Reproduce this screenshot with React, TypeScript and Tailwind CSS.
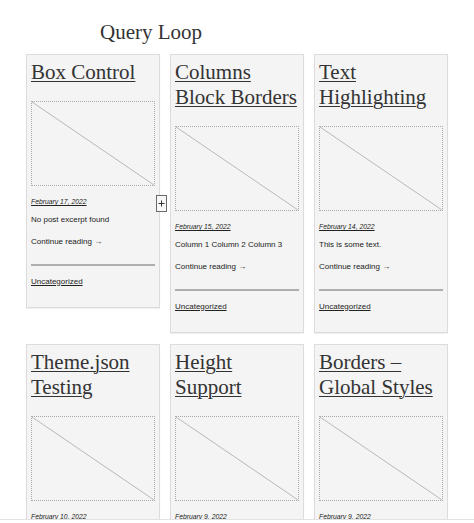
import React from "react";

type Post = {
  title: string[];
  date: string;
  excerpt?: string;
};

const posts: Post[] = [
  { title: ["Box Control"], date: "February 17, 2022", excerpt: "No post excerpt found" },
  { title: ["Columns", "Block Borders"], date: "February 15, 2022", excerpt: "Column 1 Column 2 Column 3" },
  { title: ["Text", "Highlighting"], date: "February 14, 2022", excerpt: "This is some text." },
  { title: ["Theme.json", "Testing"], date: "February 10, 2022", excerpt: "" },
  { title: ["Height", "Support"], date: "February 9, 2022", excerpt: "" },
  { title: ["Borders \u2013", "Global Styles"], date: "February 9, 2022", excerpt: "" },
];

const serif = { fontFamily: '"Liberation Serif", "DejaVu Serif", serif' };

function Placeholder() {
  return (
    <div className="relative h-[85px] w-full border border-dotted border-[#a9a9a9]">
      <svg className="absolute inset-0 h-full w-full" viewBox="0 0 100 100" preserveAspectRatio="none">
        <line x1="0" y1="0" x2="100" y2="100" stroke="#b8b8b8" strokeWidth="1" vectorEffect="non-scaling-stroke" />
      </svg>
    </div>
  );
}

function Card({ post, index }: { post: Post; index: number }) {
  return (
    <div className="relative border border-[#dcdcdc] bg-[#f4f4f4] px-[4px] pb-[19px] pl-[4px] pt-[5px] shadow-[0_1px_1px_rgba(0,0,0,0.06)]">
      <h2
        className="text-[21px] font-normal leading-[25px] text-[#333] underline decoration-1 underline-offset-[2px]"
        style={serif}
      >
        {post.title.map((l, i) => (
          <React.Fragment key={i}>
            {l}
            {i < post.title.length - 1 && <br />}
          </React.Fragment>
        ))}
      </h2>
      <div className="mt-[16px]">
        <Placeholder />
      </div>
      <div className="mt-[11px] text-[6.8px] italic leading-[10px] text-[#222] underline">{post.date}</div>
      <div className="mt-[7px] text-[8px] leading-[12px] text-[#222]">{post.excerpt}</div>
      <div className="mt-[10px] text-[8px] leading-[12px] text-[#222]">Continue reading →</div>
      <div className="mt-[15.5px] h-[2px] w-full bg-[#aeaeae]" />
      <div className="mt-[10px] text-[8px] leading-[12px] text-[#222] underline">Uncategorized</div>
      {index === 0 && (
        <div className="absolute left-[129px] top-[140px] flex h-[17px] w-[11px] items-center justify-center border border-[#6b6b6b] bg-[#f7f7f7]">
          <svg width="7" height="7" viewBox="0 0 7 7">
            <path d="M3.5 0.5V6.5M0.5 3.5H6.5" stroke="#333" strokeWidth="1" />
          </svg>
        </div>
      )}
    </div>
  );
}

export default function App() {
  return (
    <div
      className="h-[520px] w-[474px] overflow-hidden border-b border-[#e2e2e2] bg-white"
      style={{ fontFamily: '"Liberation Sans", Arial, sans-serif' }}
    >
      <h1 className="pl-[100px] pt-[20px] text-[21px] font-normal leading-[25px] text-[#333]" style={serif}>
        Query Loop
      </h1>
      <div className="grid grid-cols-[134px_134px_134px] items-start gap-x-[10px] gap-y-[11px] pl-[26px] pt-[9px]">
        {posts.map((p, i) => (
          <Card key={i} post={p} index={i} />
        ))}
      </div>
    </div>
  );
}
